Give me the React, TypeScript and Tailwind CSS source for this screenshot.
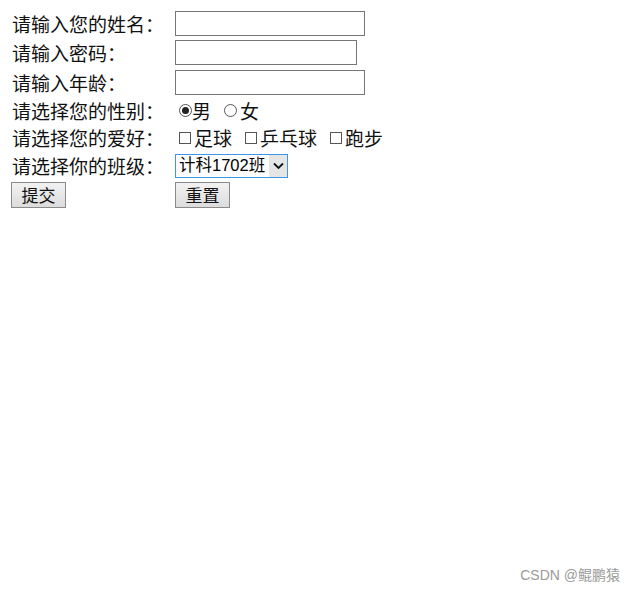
import React from "react";

const serif = { fontFamily: '"Noto Sans CJK SC", "Liberation Serif", serif' };

function Radio({ checked }: { checked?: boolean }) {
  return (
    <span className="inline-flex items-center justify-center w-[13px] h-[13px] rounded-full border border-[#555] bg-white">
      {checked && <span className="w-[7px] h-[7px] rounded-full bg-[#222]" />}
    </span>
  );
}

function Check() {
  return <span className="inline-block w-[12px] h-[12px] border border-[#555] bg-white mr-[3px]" />;
}

function Row({ label, h, children }: { label: React.ReactNode; h: string; children: React.ReactNode }) {
  return (
    <div className={`flex items-center ${h}`}>
      <div className="w-[165px] shrink-0">{label}</div>
      <div className="flex items-center">{children}</div>
    </div>
  );
}

export default function App() {
  return (
    <div className="relative w-[636px] h-[595px] bg-white text-[#111]" style={serif}>
      <div className="pt-[8px] pl-[10px] text-[19px] leading-none">
        <Row h="h-[30px]" label={<span className="pl-[2px]">请输入您的姓名：</span>}>
          <div className="w-[190px] h-[25px] border border-[#767676] bg-white" />
        </Row>
        <Row h="h-[29px]" label={<span className="pl-[2px]">请输入密码：</span>}>
          <div className="w-[182px] h-[25px] border border-[#767676] bg-white" />
        </Row>
        <Row h="h-[30px]" label={<span className="pl-[2px]">请输入年龄：</span>}>
          <div className="w-[190px] h-[25px] border border-[#767676] bg-white" />
        </Row>
        <Row h="h-[27px]" label={<span className="pl-[2px]">请选择您的性别：</span>}>
          <span className="inline-flex items-center ml-[4px]">
            <Radio checked />
            <span>男</span>
            <span className="w-[13px]" />
            <Radio />
            <span className="ml-[3px]">女</span>
          </span>
        </Row>
        <Row h="h-[27px]" label={<span className="pl-[2px]">请选择您的爱好：</span>}>
          <span className="inline-flex items-center ml-[4px]">
            <Check />
            <span>足球</span>
            <span className="w-[13px]" />
            <Check />
            <span>乒乓球</span>
            <span className="w-[13px]" />
            <Check />
            <span>跑步</span>
          </span>
        </Row>
        <Row h="h-[29px]" label={<span className="pl-[2px]">请选择你的班级：</span>}>
          <div className="flex items-stretch w-[113px] h-[24px] border border-[#3d96e6] bg-white">
            <span
              className="flex-1 flex items-center pl-[3px] text-[16.5px] text-black"
              style={{ fontFamily: '"Liberation Sans", "Noto Sans CJK SC", sans-serif' }}
            >
              计科1702班
            </span>
            <span className="w-[18px] flex items-center justify-center bg-[#e5e5e5]">
              <svg width="11" height="8" viewBox="0 0 11 8">
                <path d="M1 1.5 L5.5 6 L10 1.5" fill="none" stroke="#111" strokeWidth="1.8" />
              </svg>
            </span>
          </div>
        </Row>
        <Row
          h="h-[29px]"
          label={
            <div className="ml-[1px] w-[55px] h-[26px] border border-[#8a8a8a] bg-gradient-to-b from-[#f2f2f2] to-[#dcdcdc] flex items-center justify-center text-[17px]">
              提交
            </div>
          }
        >
          <div className="w-[55px] h-[26px] border border-[#8a8a8a] bg-gradient-to-b from-[#f2f2f2] to-[#dcdcdc] flex items-center justify-center text-[17px]">
            重置
          </div>
        </Row>
      </div>
      <div
        className="absolute right-[16px] bottom-[9px] text-[14px] text-[#9a9a9a]"
        style={{ fontFamily: '"Liberation Sans", "Noto Sans CJK SC", sans-serif' }}
      >
        CSDN @鲲鹏猿
      </div>
    </div>
  );
}
